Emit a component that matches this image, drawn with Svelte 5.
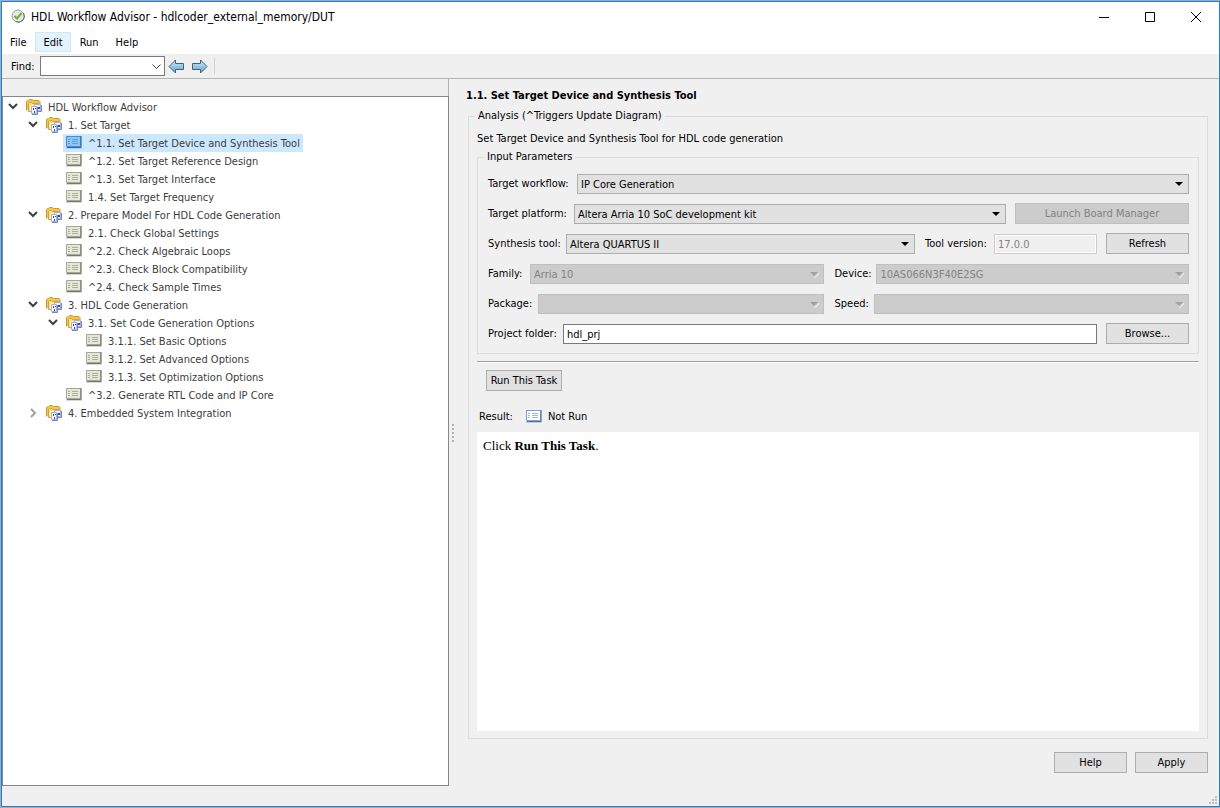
<script>
	let menus = ['File', 'Edit', 'Run', 'Help'];

	let tree = [
		{
			label: 'HDL Workflow Advisor',
			open: true,
			children: [
				{
					label: '1. Set Target',
					open: true,
					children: [
						{ label: '^1.1. Set Target Device and Synthesis Tool' },
						{ label: '^1.2. Set Target Reference Design' },
						{ label: '^1.3. Set Target Interface' },
						{ label: '1.4. Set Target Frequency' }
					]
				},
				{
					label: '2. Prepare Model For HDL Code Generation',
					open: true,
					children: [
						{ label: '2.1. Check Global Settings' },
						{ label: '^2.2. Check Algebraic Loops' },
						{ label: '^2.3. Check Block Compatibility' },
						{ label: '^2.4. Check Sample Times' }
					]
				},
				{
					label: '3. HDL Code Generation',
					open: true,
					children: [
						{
							label: '3.1. Set Code Generation Options',
							open: true,
							children: [
								{ label: '3.1.1. Set Basic Options' },
								{ label: '3.1.2. Set Advanced Options' },
								{ label: '3.1.3. Set Optimization Options' }
							]
						},
						{ label: '^3.2. Generate RTL Code and IP Core' }
					]
				},
				{ label: '4. Embedded System Integration', open: false, children: [] }
			]
		}
	];

	let selected = $state('^1.1. Set Target Device and Synthesis Tool');
	let find = $state('');
	let folder = $state('hdl_prj');
</script>

{#snippet folderIcon()}
	<svg class="icon" viewBox="0 0 16 16" aria-hidden="true">
		<path d="M.5 11.500V2.500l1-1h1l1-1h3l1 1h5.500l1 1v3" fill="#f3c64c" stroke="#cb982c" />
		<path d="M2.500 12.500v-8l1-1h2l1 1h6.500l1 1v7z" fill="#fbe08a" stroke="#cfa240" />
		<path d="M4.500 12V6.500h8" fill="none" stroke="#fff3c4" />
		<path d="M8.500 5.500h6v6h-6z" fill="#f0f3fd" stroke="#a3b1dd" />
		<path d="M15.500 6v6.500H12" fill="none" stroke="#7285c4" />
		<path d="M5.500 7.500h5v7h-5z" fill="#f8f9ff" stroke="#a3b1dd" />
		<path d="M11.500 8v7.500H6" fill="none" stroke="#7285c4" />
		<path d="M7 9h1v2H7zM12 8h2v2h-2zM9 9h1v1H9zM8 12h1v2H8z" fill="#3a4690" />
	</svg>
{/snippet}

{#snippet taskIcon(kind)}
	<svg class="icon {kind}" viewBox="0 0 16 16" aria-hidden="true">
		<path class="shade" d="M0 1h16v13H0z" />
		<path class="page" d="M.5 1.500h14v10H.5z" />
		<path class="edge" d="M15 1v11.500H1" />
		<path class="lines" d="M2 4.500h2M2 6.500h2M2 8.500h2M6 4.500h6M6 6.500h6M6 8.500h6" />
	</svg>
{/snippet}

{#snippet combo(id, value, disabled)}
	<div class="combo">
		<select {id} {disabled}>
			<option>{value}</option>
		</select>
		<svg class:disabled viewBox="0 0 9 6" aria-hidden="true">
			<path class="light" d="M8 1v1L5 5H4l1 1 4-4z" />
			<path class="tri" d="M0 0h8L4 4z" />
		</svg>
	</div>
{/snippet}

{#snippet nodes(items)}
	<ul>
		{#each items as item}
			<li>
				<div class="row">
					{#if item.children}
						<button class="toggle" class:closed={!item.open} aria-label="Toggle {item.label}">
							<svg viewBox="0 0 10 10" aria-hidden="true">
								{#if item.open}
									<path d="M1 2 5 6 9 2" />
								{:else}
									<path d="M3 1 7 5 3 9" />
								{/if}
							</svg>
						</button>
					{:else}
						<span class="toggle"></span>
					{/if}
					<button
						class="node"
						class:selected={selected === item.label}
						onclick={() => (selected = item.label)}
					>
						{#if item.children}
							{@render folderIcon()}
						{:else}
							{@render taskIcon(selected === item.label ? 'active' : 'idle')}
						{/if}
						<span>{item.label}</span>
					</button>
				</div>
				{#if item.open}
					{@render nodes(item.children)}
				{/if}
			</li>
		{/each}
	</ul>
{/snippet}

<div class="desktop">
	<div class="window">
		<header>
			<svg class="icon" viewBox="0 0 16 16" aria-hidden="true">
				<circle cx="8" cy="7" r="6" fill="#e3e8e0" stroke="#9aa09a" />
				<path d="M13.500 4a6 6 0 0 1-8 8.500" fill="none" stroke="#6b716b" />
				<path d="M4.500 7 7 9.500 11.500 4" fill="none" stroke="#6bb23c" stroke-width="2" />
			</svg>
			<h1>HDL Workflow Advisor - hdlcoder_external_memory/DUT</h1>
			<div class="controls">
				<button aria-label="Minimize">
					<svg viewBox="0 0 11 11"><path d="M0 5.500h10" /></svg>
				</button>
				<button aria-label="Maximize">
					<svg viewBox="0 0 11 11"><path d="M.5.5h9v9h-9z" /></svg>
				</button>
				<button aria-label="Close">
					<svg viewBox="0 0 11 11"><path d="M0 0l10 10M10 0L0 10" /></svg>
				</button>
			</div>
		</header>

		<nav>
			{#each menus as menu}
				<button class:hover={menu === 'Edit'}>{menu}</button>
			{/each}
		</nav>

		<div class="toolbar">
			<label for="find">Find:</label>
			<div class="find">
				<input id="find" type="text" bind:value={find} />
				<svg viewBox="0 0 9 6" aria-hidden="true"><path d="M.5.5l4 4 4-4" /></svg>
			</div>
			<button aria-label="Find previous">
				<svg viewBox="0 0 17 15" aria-hidden="true">
					<defs>
						<linearGradient id="arrow" x1="0" y1="0" x2="0" y2="1">
							<stop offset="0" stop-color="#d5ecf9" />
							<stop offset="1" stop-color="#5c9fcc" />
						</linearGradient>
					</defs>
					<path d="M1 7.500 7.500 1v3.500h8v6h-8V14z" fill="url(#arrow)" stroke="#3f6482" />
				</svg>
			</button>
			<button aria-label="Find next">
				<svg viewBox="0 0 17 15" aria-hidden="true">
					<path d="M16 7.500 9.500 1v3.500h-8v6h8V14z" fill="url(#arrow)" stroke="#3f6482" />
				</svg>
			</button>
			<span class="divider"></span>
		</div>

		<div class="body">
			<aside>
				<div class="columnhead"></div>
				<div class="tree">
					{@render nodes(tree)}
				</div>
			</aside>

			<div class="splitter">
				<i></i><i></i><i></i><i></i><i></i>
			</div>

			<main>
				<h2>1.1. Set Target Device and Synthesis Tool</h2>

				<fieldset class="analysis">
					<legend>Analysis (^Triggers Update Diagram)</legend>
					<p class="about">Set Target Device and Synthesis Tool for HDL code generation</p>

					<fieldset class="params">
						<legend>Input Parameters</legend>
						<div class="field workflow">
							<label for="workflow">Target workflow:</label>
							{@render combo('workflow', 'IP Core Generation', false)}
						</div>
						<div class="field platform">
							<label for="platform">Target platform:</label>
							{@render combo('platform', 'Altera Arria 10 SoC development kit', false)}
							<button class="push" disabled>Launch Board Manager</button>
						</div>
						<div class="field tool">
							<label for="tool">Synthesis tool:</label>
							{@render combo('tool', 'Altera QUARTUS II', false)}
							<label for="version">Tool version:</label>
							<input id="version" type="text" value="17.0.0" disabled />
							<button class="push">Refresh</button>
						</div>
						<div class="field family">
							<label for="family">Family:</label>
							{@render combo('family', 'Arria 10', true)}
							<label for="device">Device:</label>
							{@render combo('device', '10AS066N3F40E2SG', true)}
						</div>
						<div class="field package">
							<label for="package">Package:</label>
							{@render combo('package', '', true)}
							<label for="speed">Speed:</label>
							{@render combo('speed', '', true)}
						</div>
						<div class="field folder">
							<label for="folder">Project folder:</label>
							<input id="folder" type="text" bind:value={folder} />
							<button class="push">Browse...</button>
						</div>
					</fieldset>

					<hr />

					<button class="push run">Run This Task</button>

					<div class="result">
						<span>Result:</span>
						{@render taskIcon('notrun')}
						<span>Not Run</span>
					</div>

					<div class="report">Click <b>Run This Task</b>.</div>
				</fieldset>

				<div class="actions">
					<button class="push">Help</button>
					<button class="push">Apply</button>
				</div>
			</main>
		</div>

		<svg class="grip" viewBox="0 0 8 8" aria-hidden="true">
			<path d="M6 0h2v2H6zM3 3h2v2H3zM6 3h2v2H6zM0 6h2v2H0zM3 6h2v2H3zM6 6h2v2H6z" />
		</svg>
	</div>
</div>

<style>
	:global(body) {
		margin: 0;
	}

	.desktop {
		box-sizing: border-box;
		display: flex;
		min-height: 100vh;
		padding: 1px 0 1px 1px;
		background: #a8acb0;
		font-family: 'DejaVu Sans Condensed', 'Noto Sans', sans-serif;
		font-size: 11px;
		line-height: 14px;
		color: #000;
	}

	.window {
		position: relative;
		flex: 1;
		min-width: 0;
		display: flex;
		flex-direction: column;
		border: 1px solid #1883d7;
		background: #f0f0f0;
	}

	button,
	input,
	select {
		box-sizing: border-box;
		margin: 0;
		font: inherit;
		color: inherit;
	}

	button {
		padding: 0;
		border: 0;
		background: none;
	}

	.icon {
		flex: none;
		width: 16px;
		height: 16px;
	}

	header {
		display: flex;
		align-items: center;
		height: 30px;
		padding-left: 8px;
		background: #fff;
	}

	h1 {
		flex: 1;
		margin: 0 0 0 5px;
		font-size: 12px;
		font-weight: normal;
		line-height: 16px;
	}

	.controls {
		display: flex;
	}

	.controls button {
		display: grid;
		place-items: center;
		width: 46px;
		height: 28px;
	}

	.controls svg {
		width: 11px;
		height: 11px;
		fill: none;
		stroke: #000;
	}

	nav {
		display: flex;
		gap: 1px;
		height: 20px;
		padding-bottom: 2px;
		background: #fff;
	}

	nav button {
		padding: 2px 7px 0;
		border: 1px solid transparent;
	}

	nav .hover {
		border-color: #cce8ff;
		background: #e5f3ff;
	}

	.toolbar {
		display: flex;
		align-items: center;
		height: 24px;
		padding-left: 9px;
		border-bottom: 1px solid #b4b4b4;
	}

	.toolbar label {
		width: 29px;
		padding-top: 2px;
	}

	.find {
		position: relative;
		width: 125px;
		margin-right: 3px;
	}

	.find input {
		display: block;
		width: 100%;
		height: 20px;
		border: 1px solid #7a7a7a;
		background: #fff;
	}

	.find svg {
		position: absolute;
		right: 4px;
		top: 8px;
		width: 9px;
		height: 6px;
		fill: none;
		stroke: #444;
	}

	.toolbar button {
		width: 17px;
		height: 15px;
		margin-right: 6px;
	}

	.toolbar button svg {
		display: block;
	}

	.divider {
		width: 1px;
		height: 16px;
		background: #d0d0d0;
	}

	.body {
		flex: 1;
		display: flex;
		padding-bottom: 20px;
	}

	aside {
		flex: 0 0 447px;
		display: flex;
		flex-direction: column;
	}

	.columnhead {
		height: 17px;
		box-sizing: border-box;
		border-right: 1px solid #b4b4b4;
	}

	.tree {
		flex: 1;
		padding-top: 1px;
		border: 1px solid #828790;
		background: #fff;
		color: #3c3c3c;
	}

	ul {
		margin: 0;
		padding: 0;
		list-style: none;
	}

	ul :global(ul) {
		padding-left: 20px;
	}

	.row {
		display: flex;
		height: 18px;
	}

	.toggle {
		display: grid;
		place-items: center;
		width: 20px;
	}

	.toggle svg {
		width: 10px;
		height: 10px;
		fill: none;
		stroke: #404040;
		stroke-width: 2;
	}

	.toggle.closed svg {
		stroke: #a0a0a0;
	}

	.node {
		display: flex;
		align-items: center;
		gap: 6px;
		padding: 0 3px;
		white-space: nowrap;
	}

	.node span {
		padding-top: 1px;
	}

	.node.selected {
		background: #cce8ff;
	}

	.idle .shade {
		fill: #d8d8d8;
	}

	.idle .page {
		fill: #e4e6d8;
		stroke: #a4a88c;
	}

	.idle .edge {
		fill: none;
		stroke: #77796e;
	}

	.idle .lines {
		stroke: #adaea6;
	}

	.active .shade {
		fill: #a9d2f8;
	}

	.active .page {
		fill: #8ec6fa;
		stroke: #4a8ad6;
	}

	.active .edge {
		fill: none;
		stroke: #35689f;
	}

	.active .lines {
		stroke: #62a0d8;
	}

	.notrun .shade {
		fill: #c8cddc;
	}

	.notrun .page {
		fill: #fff;
		stroke: #7aa0e0;
	}

	.notrun .edge {
		fill: none;
		stroke: #5a6ea8;
	}

	.notrun .lines {
		stroke: #a8bcc0;
	}

	.splitter {
		flex: 0 0 8px;
		display: flex;
		flex-direction: column;
		align-items: center;
		justify-content: center;
		gap: 2px;
	}

	.splitter i {
		width: 2px;
		height: 2px;
		background: #b0b0b0;
	}

	main {
		flex: 1;
		min-width: 0;
		display: flex;
		flex-direction: column;
		padding: 10px 11px 13px 9px;
	}

	h2 {
		margin: 0 0 6px;
		font-size: 11px;
		line-height: 14px;
	}

	fieldset {
		min-width: 0;
		margin: 0;
		border: 1px solid #dcdcdc;
	}

	legend {
		margin-left: -2px;
		padding: 0 3px;
	}

	.analysis {
		flex: 1;
		display: flex;
		flex-direction: column;
		margin-left: 2px;
		padding: 9px 8px 7px;
	}

	.about {
		margin: 0 0 4px;
	}

	.params {
		padding: 9px 9px 9px 10px;
	}

	.params legend {
		margin-left: -4px;
	}

	.field {
		display: grid;
		align-items: center;
		height: 21px;
		margin-bottom: 9px;
	}

	.field:last-child {
		margin-bottom: 0;
	}

	.field label {
		padding-top: 1px;
	}

	.workflow {
		grid-template-columns: 89px 1fr;
	}

	.platform {
		grid-template-columns: 86px 1fr 9px 174px;
	}

	.platform .push {
		grid-column: 4;
	}

	.tool {
		grid-template-columns: 78px 1fr 10px 69px 103px 9px 83px;
	}

	.tool label:nth-of-type(2) {
		grid-column: 4;
	}

	.tool .push {
		grid-column: 7;
	}

	.family {
		grid-template-columns: 42px 294fr 10px 42px 312fr;
	}

	.package {
		grid-template-columns: 50px 286fr 10px 40px 314fr;
	}

	.family label:nth-of-type(2),
	.package label:nth-of-type(2) {
		grid-column: 4;
	}

	.folder {
		grid-template-columns: 75px 1fr 9px 83px;
	}

	.folder .push {
		grid-column: 4;
	}

	.combo {
		position: relative;
	}

	select {
		appearance: none;
		display: block;
		width: 100%;
		height: 20px;
		padding: 2px 20px 0 3px;
		border: 1px solid #adadad;
		border-radius: 0;
		background: #e1e1e1;
	}

	select:disabled {
		border-color: #bfbfbf;
		background: #ccc;
		color: #838383;
		opacity: 1;
	}

	.combo svg {
		position: absolute;
		right: 5px;
		top: 8px;
		width: 9px;
		height: 6px;
		pointer-events: none;
	}

	.combo .light {
		fill: none;
	}

	.combo .disabled .light {
		fill: #fff;
	}

	.combo .disabled .tri {
		fill: #a0a0a0;
	}

	.field input {
		width: 100%;
		height: 20px;
		padding: 2px 3px 0;
		border: 1px solid #7a7a7a;
		background: #fff;
	}

	.field input:disabled {
		border-color: #ccc;
		background: #f0f0f0;
		box-shadow: inset 0 0 0 1px #fff;
		color: #838383;
	}

	.push {
		height: 21px;
		padding-top: 1px;
		border: 1px solid #adadad;
		background: #e1e1e1;
	}

	.push:disabled {
		border-color: #bfbfbf;
		background: #ccc;
		color: #838383;
	}

	hr {
		width: 100%;
		height: 1px;
		margin: 7px 0;
		border: 0;
		border-top: 1px solid #a0a0a0;
		background: #fff;
	}

	.run {
		align-self: flex-start;
		width: 76px;
		margin-left: 9px;
	}

	.result {
		display: flex;
		align-items: center;
		height: 16px;
		margin: 18px 0 7px 2px;
	}

	.result .icon {
		margin: 0 6px 0 13px;
	}

	.report {
		flex: 1;
		padding: 6px;
		background: #fff;
		font: 13px/16px 'Liberation Serif', serif;
	}

	.actions {
		display: flex;
		justify-content: flex-end;
		gap: 8px;
		margin-top: 13px;
	}

	.actions .push {
		width: 73px;
	}

	.grip {
		position: absolute;
		right: 2px;
		bottom: 2px;
		width: 8px;
		height: 8px;
		fill: #bfbfbf;
	}
</style>
